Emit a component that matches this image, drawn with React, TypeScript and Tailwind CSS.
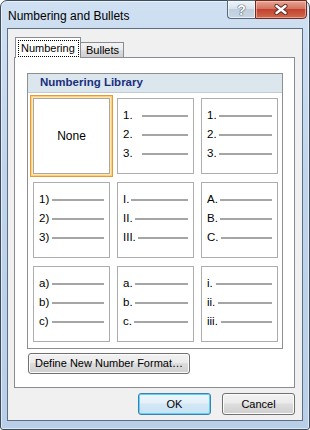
import React from 'react';

type Cell = {
  labels?: string[];
  labelW?: string; // fixed label width, or none to let the line follow the text
  gap?: string;
};

const cells: Cell[] = [
  {},
  { labels: ['1.', '2.', '3.'], labelW: 'w-[19px]' },
  { labels: ['1.', '2.', '3.'], labelW: 'w-[12px]' },
  { labels: ['1)', '2)', '3)'], labelW: 'w-[13px]' },
  { labels: ['I.', 'II.', 'III.'], gap: 'ml-[2px]' },
  { labels: ['A.', 'B.', 'C.'], gap: 'ml-[2px]' },
  { labels: ['a)', 'b)', 'c)'], labelW: 'w-[13px]' },
  { labels: ['a.', 'b.', 'c.'], gap: 'ml-[2px]' },
  { labels: ['i.', 'ii.', 'iii.'], gap: 'ml-[3px]' },
];

function LibraryCell({ cell }: { cell: Cell }) {
  if (!cell.labels) {
    return (
      <div className="flex h-[76px] w-[77px] items-center justify-center border border-[#a8a8a8] bg-white text-[12px] text-black shadow-[0_0_0_1px_#fde7b0,0_0_0_2px_#fbd27a,0_0_0_3px_#e49a3c]">
        None
      </div>
    );
  }
  return (
    <div className="flex h-[76px] w-[77px] flex-col border border-[#adadad] bg-white pl-[5px] pr-[5px] pt-[7px]">
      {cell.labels.map((l) => (
        <div key={l} className="flex h-[19px] items-center text-[11.5px] leading-none text-black">
          <span className={cell.labelW ? `${cell.labelW} shrink-0` : 'shrink-0'}>{l}</span>
          <span className={`h-[2px] flex-1 bg-[#a5a5a5] ${cell.gap ?? ''}`} />
        </div>
      ))}
    </div>
  );
}

const grayBtn =
  'rounded-[3px] border border-[#707070] bg-[linear-gradient(#f2f2f2,#ebebeb_45%,#dddddd_50%,#cfcfcf)] shadow-[inset_0_0_0_1px_#fcfcfc]';

export default function App() {
  return (
    <div className="h-[430px] w-[310px] bg-white font-['Liberation_Sans',Arial,sans-serif]">
      <div className="flex h-full flex-col rounded-t-[7px] rounded-b-[3px] border border-[#3d4d5e] bg-[linear-gradient(#cfe0f2,#c0d5ec_40%,#b9cfe8)] px-[6px] pb-[8px] shadow-[inset_0_0_0_1px_rgba(255,255,255,0.55)]">
        {/* title bar */}
        <div className="flex h-[27px] items-start justify-between">
          <div className="pl-px pt-[7px] text-[12px] leading-[16px] text-black">Numbering and Bullets</div>
          <div className="-mr-[4px] -mt-px flex">
            <div className="flex h-[19px] w-[28px] items-center justify-center rounded-bl-[4px] border border-r-0 border-[#58687c] bg-[linear-gradient(#eef3f8,#d9e3ee_45%,#c0cfde_50%,#c8d6e4)] shadow-[inset_0_0_0_1px_rgba(255,255,255,0.6)]">
              <span className="text-[14px] font-bold leading-none text-white [text-shadow:0_0_1px_#46505c,0_0_1px_#46505c,0_0_1px_#46505c]">
                ?
              </span>
            </div>
            <div className="flex h-[19px] w-[52px] items-center justify-center rounded-br-[4px] border border-[#6b2a22] bg-[linear-gradient(#e8a594,#d47462_45%,#c4432f_50%,#d0694f)] shadow-[inset_0_0_0_1px_rgba(255,220,210,0.5)]">
              <svg width="14" height="11" viewBox="0 0 14 11">
                <path d="M2.5 2 L11.5 9 M11.5 2 L2.5 9" stroke="#5a2a22" strokeWidth="4.2" strokeLinecap="round" />
                <path d="M2.5 2 L11.5 9 M11.5 2 L2.5 9" stroke="#ffffff" strokeWidth="2.4" strokeLinecap="round" />
              </svg>
            </div>
          </div>
        </div>

        {/* client area */}
        <div className="flex flex-1 flex-col border border-[#5f6f82] bg-[#f0f0f0] pl-[6px] pr-[7px] pt-[8px] text-[11px] text-black">
          {/* tabs */}
          <div className="relative z-10 flex h-[20px] items-end pl-px">
            <div className="-mb-px flex h-[21px] w-[66px] items-start border border-b-0 border-[#898c95] bg-white pl-[2px] pt-[2px]">
              <span className="flex h-[17px] w-[61px] items-center border border-dotted border-black pl-[2px] leading-none">
                Numbering
              </span>
            </div>
            <div className="-ml-px flex h-[15px] w-[44px] items-center border border-b-0 border-[#898c95] bg-[linear-gradient(#f3f3f3,#ebebeb_50%,#dddddd_51%,#cfcfcf)] pl-[5px] leading-none">
              Bullets
            </div>
          </div>

          {/* tab page */}
          <div className="flex h-[331px] flex-col border border-[#898c95] bg-white pl-[12px] pr-[11px] pt-[15px]">
            <div className="flex h-[276px] flex-col border border-[#8e8f8f]">
              <div className="flex h-[19px] items-center border-b border-[#c3ccd4] bg-[#dce6ed] pl-[12px] text-[11.5px] font-bold text-[#1b2f7f]">
                Numbering Library
              </div>
              <div className="grid grid-cols-[repeat(3,77px)] gap-x-[7px] gap-y-[8px] pl-[5px] pt-[5px]">
                {cells.map((c, i) => (
                  <LibraryCell key={i} cell={c} />
                ))}
              </div>
            </div>
            <div className="pl-px pt-[4px]">
              <button className={`h-[21px] w-[162px] text-[11px] text-black ${grayBtn}`}>
                Define New Number Format…
              </button>
            </div>
          </div>

          {/* dialog buttons */}
          <div className="flex justify-end gap-[11px] pt-[5px]">
            <button className="h-[22px] w-[73px] rounded-[3px] border border-[#3c7fb1] bg-[linear-gradient(#eef6fb,#e3f0f9_45%,#d3e8f5_50%,#c8e1f2)] text-[11px] text-black shadow-[inset_0_0_0_1px_#5ed1f5]">
              OK
            </button>
            <button className={`h-[22px] w-[73px] text-[11px] text-black ${grayBtn}`}>Cancel</button>
          </div>
        </div>
      </div>
    </div>
  );
}
